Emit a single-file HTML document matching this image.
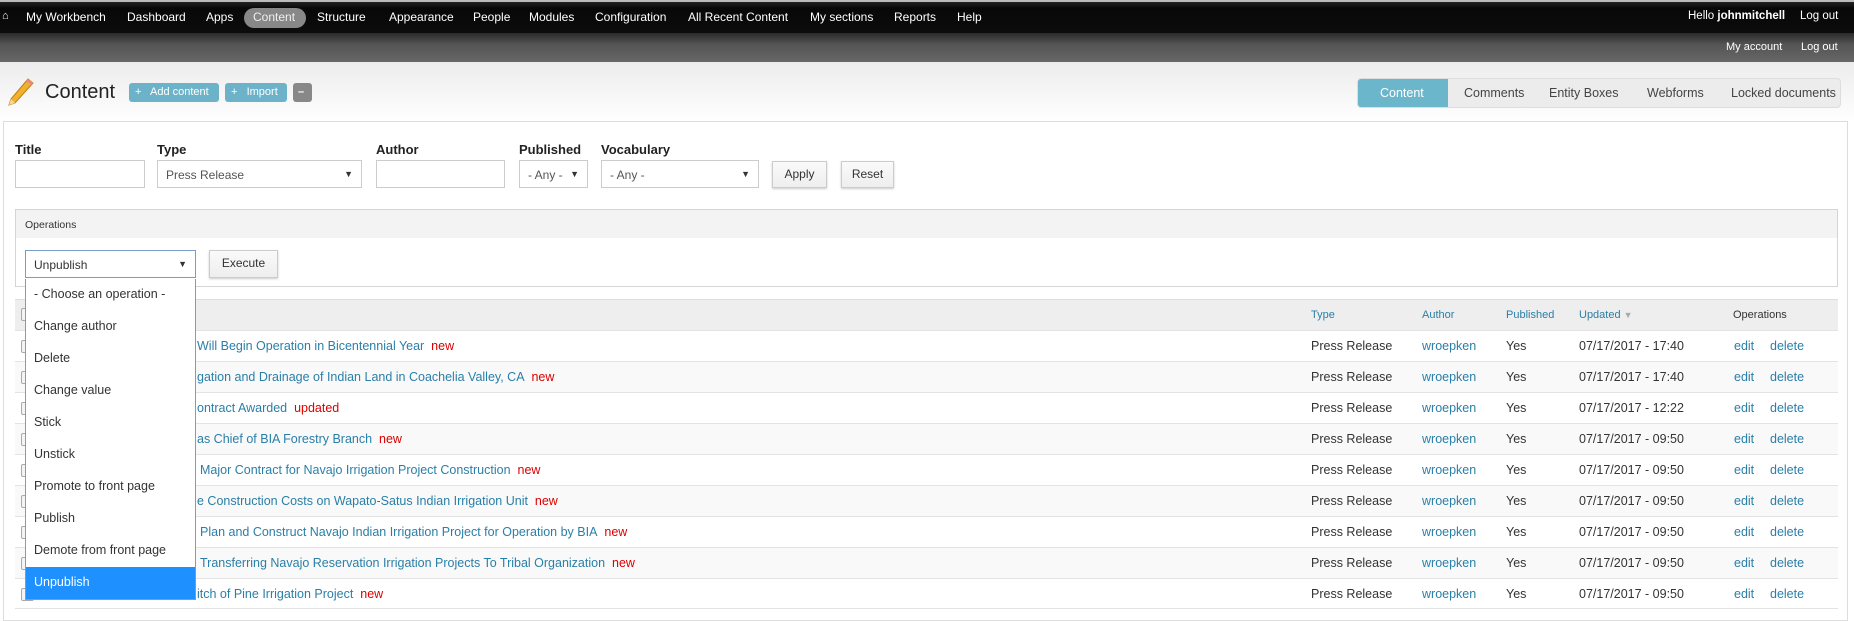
<!DOCTYPE html>
<html><head><meta charset="utf-8"><style>
*{margin:0;padding:0;box-sizing:border-box}
body{width:1854px;height:617px;overflow:hidden;background:#fff;font-family:"Liberation Sans",sans-serif;font-size:13px;color:#333;position:relative}
.a{position:absolute;white-space:nowrap}
#top{position:absolute;left:0;top:0;width:1854px;height:33px;background:linear-gradient(#222,#080808 20%,#0c0c0c);border-top:2px solid #bbb}
#sec{position:absolute;left:0;top:33px;width:1854px;height:29px;background:linear-gradient(#2a2a2a,#555 40%,#666)}
.nav{color:#fff;font-size:12px;top:10px}
#hdr{position:absolute;left:0;top:62px;width:1854px;height:60px;background:linear-gradient(#ececec,#fff)}
.btn{position:absolute;background:#6cb3c9;color:#fff;font-size:11px;border-radius:3px;height:19px;line-height:19px;padding-left:6px}
.tabs{position:absolute;left:1357px;top:78px;width:484px;height:30px;background:#ececec;border:1px solid #ddd;border-radius:4px;font-size:12.5px;color:#444}
.tabs span{position:absolute;top:7px}
.lbl{font-weight:bold;font-size:13px;top:142px;color:#222}
.in{position:absolute;top:160px;height:28px;border:1px solid #ccc;background:#fff;font-size:12px;color:#555;padding:7px 8px}
.in .ar{position:absolute;right:8px;top:8px;font-size:9px;color:#333}
.bt{position:absolute;top:161px;height:27px;border:1px solid #ccc;background:linear-gradient(#fafafa,#eee);font-size:12px;color:#333;text-align:center;line-height:25px;box-shadow:0 1px 2px #ccc}
.row{position:absolute;left:15px;width:1823px;height:31px;border-top:1px solid #e3e3e3}
.row span{position:absolute;top:8px;font-size:12.5px}
.row i{position:absolute;left:6px;top:9px;width:13px;height:13px;border:1px solid #aaa;border-radius:2px;background:#f4f4f4}
.lk{color:#2a7fa8}
.nw{color:#d00}
.dd{position:absolute;left:25px;top:279px;width:171px;height:321px;background:#fff;border:1px solid #7a9cc6;border-top:none}
.dd div{height:32px;line-height:30px;padding-left:8px;font-size:12.5px;color:#333}
</style></head><body>
<div id="top"></div>
<div class="a nav" style="left:2px;font-size:11px">⌂</div>
<div class="a nav" style="left:26px">My Workbench</div>
<div class="a nav" style="left:127px">Dashboard</div>
<div class="a nav" style="left:206px">Apps</div>
<div class="a" style="left:244px;top:8px;width:62px;height:20px;border-radius:10px;background:#888"></div>
<div class="a nav" style="left:253px;color:#eee">Content</div>
<div class="a nav" style="left:317px">Structure</div>
<div class="a nav" style="left:389px">Appearance</div>
<div class="a nav" style="left:473px">People</div>
<div class="a nav" style="left:529px">Modules</div>
<div class="a nav" style="left:595px">Configuration</div>
<div class="a nav" style="left:688px">All Recent Content</div>
<div class="a nav" style="left:810px">My sections</div>
<div class="a nav" style="left:894px">Reports</div>
<div class="a nav" style="left:957px">Help</div>
<div class="a nav" style="left:1688px;font-size:11.5px">Hello <b>johnmitchell</b></div>
<div class="a nav" style="left:1800px;font-size:11.5px">Log out</div>
<div id="sec"></div>
<div class="a" style="left:1726px;top:41px;color:#fff;font-size:11px">My account</div>
<div class="a" style="left:1801px;top:41px;color:#fff;font-size:11px">Log out</div>
<div id="hdr"></div>
<svg class="a" style="left:6px;top:77px" width="30" height="30" viewBox="0 0 30 30"><path d="M22 2 L27 6 L9 26 L3 28 L5 22 Z" fill="#f0b030" stroke="#c08010"/><path d="M22 2 L27 6 L25 8 L20 4Z" fill="#e88"/><path d="M3 28 L5 22 L9 26Z" fill="#f3d9a0"/></svg>
<div class="a" style="left:45px;top:81px;font-size:20px;color:#222">Content</div>
<div class="btn" style="left:129px;top:83px;width:90px">+&nbsp;&nbsp; Add content</div>
<div class="btn" style="left:225px;top:83px;width:62px">+&nbsp;&nbsp; Import</div>
<div class="btn" style="left:293px;top:83px;width:19px;background:#888;padding-left:5px;font-weight:bold">–</div>
<div class="tabs"><div style="position:absolute;left:0;top:0;width:90px;height:28px;background:#6cb6cc;border-radius:3px 0 0 3px"></div>
<span style="left:22px;color:#fff">Content</span><span style="left:106px">Comments</span><span style="left:191px">Entity Boxes</span><span style="left:289px">Webforms</span><span style="left:373px">Locked documents</span></div>
<div class="a" style="left:3px;top:121px;width:1845px;height:500px;border:1px solid #ddd"></div>
<div class="a lbl" style="left:15px">Title</div>
<div class="a lbl" style="left:157px">Type</div>
<div class="a lbl" style="left:376px">Author</div>
<div class="a lbl" style="left:519px">Published</div>
<div class="a lbl" style="left:601px">Vocabulary</div>
<div class="in" style="left:15px;width:130px"></div>
<div class="in" style="left:157px;width:205px">Press Release<span class="ar">▼</span></div>
<div class="in" style="left:376px;width:129px"></div>
<div class="in" style="left:519px;width:69px">- Any -<span class="ar">▼</span></div>
<div class="in" style="left:601px;width:158px">- Any -<span class="ar">▼</span></div>
<div class="bt" style="left:772px;width:55px">Apply</div>
<div class="bt" style="left:841px;width:53px">Reset</div>
<div class="a" style="left:15px;top:209px;width:1823px;height:78px;border:1px solid #d5d5d5"></div>
<div class="a" style="left:16px;top:210px;width:1821px;height:28px;background:#f3f3f3"></div>
<div class="a" style="left:25px;top:219px;font-size:10.5px;color:#333">Operations</div>
<div class="in" style="left:25px;top:250px;width:171px;height:28px;border-color:#7a9cc6;color:#333">Unpublish<span class="ar">▼</span></div>
<div class="bt" style="left:209px;top:250px;width:69px;height:28px">Execute</div>
<div class="a" style="left:15px;top:299px;width:1823px;height:31px;background:#eee;border-top:1px solid #ddd"></div>
<div class="a" style="left:21px;top:308px;width:13px;height:13px;border:1px solid #aaa;border-radius:2px;background:#f4f4f4"></div>
<div class="a lk" style="left:1311px;top:309px;font-size:11px">Type</div>
<div class="a lk" style="left:1422px;top:309px;font-size:11px">Author</div>
<div class="a lk" style="left:1506px;top:309px;font-size:11px">Published</div>
<div class="a lk" style="left:1579px;top:309px;font-size:11px">Updated <span style="color:#aaa;font-size:9px">▼</span></div>
<div class="a" style="left:1733px;top:309px;font-size:11px">Operations</div>
<div class="row" style="top:330px"><i></i><span class="lk" style="left:182px">Will Begin Operation in Bicentennial Year&nbsp; <b class="nw" style="font-weight:normal">new</b></span><span style="left:1296px">Press Release</span><span class="lk" style="left:1407px">wroepken</span><span style="left:1491px">Yes</span><span style="left:1564px">07/17/2017 - 17:40</span><span class="lk" style="left:1719px">edit</span><span class="lk" style="left:1755px">delete</span></div>
<div class="row" style="top:361px;background:#f9f9f9"><i></i><span class="lk" style="left:182px">gation and Drainage of Indian Land in Coachelia Valley, CA&nbsp; <b class="nw" style="font-weight:normal">new</b></span><span style="left:1296px">Press Release</span><span class="lk" style="left:1407px">wroepken</span><span style="left:1491px">Yes</span><span style="left:1564px">07/17/2017 - 17:40</span><span class="lk" style="left:1719px">edit</span><span class="lk" style="left:1755px">delete</span></div>
<div class="row" style="top:392px"><i></i><span class="lk" style="left:182px">ontract Awarded&nbsp; <b class="nw" style="font-weight:normal">updated</b></span><span style="left:1296px">Press Release</span><span class="lk" style="left:1407px">wroepken</span><span style="left:1491px">Yes</span><span style="left:1564px">07/17/2017 - 12:22</span><span class="lk" style="left:1719px">edit</span><span class="lk" style="left:1755px">delete</span></div>
<div class="row" style="top:423px;background:#f9f9f9"><i></i><span class="lk" style="left:182px">as Chief of BIA Forestry Branch&nbsp; <b class="nw" style="font-weight:normal">new</b></span><span style="left:1296px">Press Release</span><span class="lk" style="left:1407px">wroepken</span><span style="left:1491px">Yes</span><span style="left:1564px">07/17/2017 - 09:50</span><span class="lk" style="left:1719px">edit</span><span class="lk" style="left:1755px">delete</span></div>
<div class="row" style="top:454px"><i></i><span class="lk" style="left:185px">Major Contract for Navajo Irrigation Project Construction&nbsp; <b class="nw" style="font-weight:normal">new</b></span><span style="left:1296px">Press Release</span><span class="lk" style="left:1407px">wroepken</span><span style="left:1491px">Yes</span><span style="left:1564px">07/17/2017 - 09:50</span><span class="lk" style="left:1719px">edit</span><span class="lk" style="left:1755px">delete</span></div>
<div class="row" style="top:485px;background:#f9f9f9"><i></i><span class="lk" style="left:182px">e Construction Costs on Wapato-Satus Indian Irrigation Unit&nbsp; <b class="nw" style="font-weight:normal">new</b></span><span style="left:1296px">Press Release</span><span class="lk" style="left:1407px">wroepken</span><span style="left:1491px">Yes</span><span style="left:1564px">07/17/2017 - 09:50</span><span class="lk" style="left:1719px">edit</span><span class="lk" style="left:1755px">delete</span></div>
<div class="row" style="top:516px"><i></i><span class="lk" style="left:185px">Plan and Construct Navajo Indian Irrigation Project for Operation by BIA&nbsp; <b class="nw" style="font-weight:normal">new</b></span><span style="left:1296px">Press Release</span><span class="lk" style="left:1407px">wroepken</span><span style="left:1491px">Yes</span><span style="left:1564px">07/17/2017 - 09:50</span><span class="lk" style="left:1719px">edit</span><span class="lk" style="left:1755px">delete</span></div>
<div class="row" style="top:547px;background:#f9f9f9"><i></i><span class="lk" style="left:185px">Transferring Navajo Reservation Irrigation Projects To Tribal Organization&nbsp; <b class="nw" style="font-weight:normal">new</b></span><span style="left:1296px">Press Release</span><span class="lk" style="left:1407px">wroepken</span><span style="left:1491px">Yes</span><span style="left:1564px">07/17/2017 - 09:50</span><span class="lk" style="left:1719px">edit</span><span class="lk" style="left:1755px">delete</span></div>
<div class="row" style="top:578px;border-bottom:1px solid #e3e3e3"><i></i><span class="lk" style="left:182px">itch of Pine Irrigation Project&nbsp; <b class="nw" style="font-weight:normal">new</b></span><span style="left:1296px">Press Release</span><span class="lk" style="left:1407px">wroepken</span><span style="left:1491px">Yes</span><span style="left:1564px">07/17/2017 - 09:50</span><span class="lk" style="left:1719px">edit</span><span class="lk" style="left:1755px">delete</span></div>
<div class="dd">
<div>- Choose an operation -</div><div>Change author</div><div>Delete</div><div>Change value</div><div>Stick</div><div>Unstick</div><div>Promote to front page</div><div>Publish</div><div>Demote from front page</div><div style="background:#1e90ff;color:#fff">Unpublish</div>
</div>
</body></html>
